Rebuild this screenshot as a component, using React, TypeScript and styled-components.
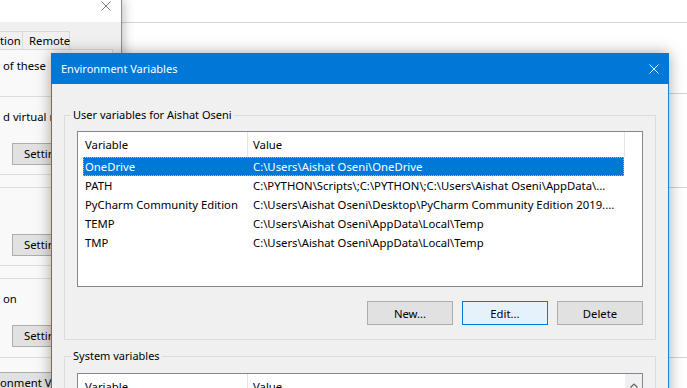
import * as React from 'react'
import styled, { createGlobalStyle } from 'styled-components'

type Variable = {
  name: string
  value: string
}

const userVariables: Variable[] = [
  { name: 'OneDrive', value: 'C:\\Users\\Aishat Oseni\\OneDrive' },
  { name: 'PATH', value: 'C:\\PYTHON\\Scripts\\;C:\\PYTHON\\;C:\\Users\\Aishat Oseni\\AppData\\...' },
  { name: 'PyCharm Community Edition', value: 'C:\\Users\\Aishat Oseni\\Desktop\\PyCharm Community Edition 2019....' },
  { name: 'TEMP', value: 'C:\\Users\\Aishat Oseni\\AppData\\Local\\Temp' },
  { name: 'TMP', value: 'C:\\Users\\Aishat Oseni\\AppData\\Local\\Temp' },
]

const GlobalStyle = createGlobalStyle`
  html, body {
    margin: 0;
    padding: 0;
    background: #ffffff;
  }
  body {
    font-family: "Noto Sans", "Open Sans", sans-serif;
    font-size: 11.3px;
    color: #000;
  }
`

const CloseIcon: React.FC<{ color: string }> = ({ color }) => (
  <svg width="10" height="10" viewBox="0 0 10 10">
    <path d="M0.5 0.5 L9.5 9.5 M9.5 0.5 L0.5 9.5" stroke={color} strokeWidth="1" fill="none" />
  </svg>
)

const ChevronUp = () => (
  <svg width="8" height="5" viewBox="0 0 8 5">
    <path d="M0.5 4.5 L4 1 L7.5 4.5" stroke="#606060" strokeWidth="1.2" fill="none" />
  </svg>
)

const App: React.FC = () => {
  return (
    <Desktop>
      <GlobalStyle />
      <Backdrop>
        <BackdropBand $height={23} />
        <BackdropBand $height={71} />
        <BackdropBand $height={94} />
        <BackdropBand $height={170} />
      </Backdrop>

      <BackWindow>
        <BackTitleBar>
          <CloseIcon color="#7a7a7a" />
        </BackTitleBar>
        <TabStrip>
          <Tab $width={23}>tion</Tab>
          <Tab $width={48} $padLeft={6}>Remote</Tab>
        </TabStrip>
        <TabPanel>
          <PanelText $top={8} $width={48}>of these changes.</PanelText>
          <BackGroup $top={22} $height={79}>
            <PanelText $top={12} $width={54}>d virtual memory</PanelText>
            <BackButton $top={18}>Settings...</BackButton>
          </BackGroup>
          <BackGroup $top={12} $height={79}>
            <BackButton $top={46}>Settings...</BackButton>
          </BackGroup>
          <BackGroup $top={12} $height={80}>
            <PanelText $top={12} $width={54}>on</PanelText>
            <BackButton $top={18}>Settings...</BackButton>
          </BackGroup>
          <EnvButton>onment Variables...</EnvButton>
        </TabPanel>
      </BackWindow>

      <Dialog>
        <TitleBar>
          <TitleText>Environment Variables</TitleText>
          <CloseIcon color="#ffffff" />
        </TitleBar>
        <DialogBody>
          <GroupBox $top={23}>
            <GroupLegend>User variables for Aishat Oseni</GroupLegend>
            <ListBox $height={156}>
              <ListMain>
                <HeaderRow>
                  <HeaderCell $width={170} $padLeft={7}>Variable</HeaderCell>
                  <HeaderCell $width={377} $padLeft={5}>Value</HeaderCell>
                </HeaderRow>
                {userVariables.map((v, i) => (
                  <Row key={v.name} $selected={i === 0}>
                    <Cell $width={164} $padLeft={2}>{v.name}</Cell>
                    <Cell $width={377} $padLeft={6}>{v.value}</Cell>
                  </Row>
                ))}
              </ListMain>
            </ListBox>
            <ButtonRow>
              <Button>New...</Button>
              <Button $focused>Edit...</Button>
              <Button>Delete</Button>
            </ButtonRow>
          </GroupBox>
          <GroupBox $top={8}>
            <GroupLegend>System variables</GroupLegend>
            <ListBox $height={156} $top={9}>
              <ListMain>
                <HeaderRow>
                  <HeaderCell $width={170} $padLeft={7}>Variable</HeaderCell>
                  <HeaderCell $width={376} $padLeft={5} $noDivider>Value</HeaderCell>
                </HeaderRow>
              </ListMain>
              <ScrollBar>
                <ChevronUp />
              </ScrollBar>
            </ListBox>
          </GroupBox>
        </DialogBody>
      </Dialog>
    </Desktop>
  )
}

export default App

const Desktop = styled.div`
  position: relative;
  width: 687px;
  height: 388px;
  overflow: hidden;
  background: #ffffff;
`

const Backdrop = styled.div`
  position: absolute;
  inset: 0;
  display: flex;
  flex-direction: column;
`

const BackdropBand = styled.div<{ $height: number }>`
  box-sizing: border-box;
  height: ${(p) => p.$height}px;
  flex-shrink: 0;
  border-bottom: 1px solid #d4d4d4;
`

const BackWindow = styled.div`
  position: absolute;
  left: 0;
  top: 0;
  width: 122px;
  height: 388px;
  box-sizing: border-box;
  background: #f0f0f0;
  border-right: 1px solid #8e8e8e;
  box-shadow: 2px 0 10px rgba(0, 0, 0, 0.25);
  display: flex;
  flex-direction: column;
  overflow: hidden;
`

const BackTitleBar = styled.div`
  height: 22px;
  flex-shrink: 0;
  background: #ffffff;
  display: flex;
  justify-content: flex-end;
  align-items: flex-start;
  padding: 1px 10px 0 0;
  box-sizing: border-box;
`

const TabStrip = styled.div`
  display: flex;
  margin-top: 9px;
  height: 18px;
`

const Tab = styled.div<{ $width: number; $padLeft?: number }>`
  box-sizing: border-box;
  width: ${(p) => p.$width}px;
  height: 18px;
  padding-left: ${(p) => p.$padLeft ?? 0}px;
  border: 1px solid #d9d9d9;
  border-left: ${(p) => (p.$padLeft ? '1px solid #d9d9d9' : 'none')};
  border-bottom: none;
  margin-left: ${(p) => (p.$padLeft ? '-1px' : '0')};
  line-height: 17px;
  white-space: nowrap;
`

const TabPanel = styled.div`
  box-sizing: border-box;
  width: 113px;
  flex: 1;
  border-top: 1px solid #d9d9d9;
  border-right: 1px solid #d9d9d9;
  background: #f9f9f9;
  display: flex;
  flex-direction: column;
`

const PanelText = styled.div<{ $top: number; $width: number }>`
  box-sizing: border-box;
  margin-top: ${(p) => p.$top}px;
  width: ${(p) => p.$width}px;
  padding-left: 3px;
  line-height: 16px;
  white-space: nowrap;
  overflow: hidden;
`

const BackGroup = styled.div<{ $top: number; $height: number }>`
  box-sizing: border-box;
  margin: ${(p) => p.$top}px 0 0 -4px;
  height: ${(p) => p.$height}px;
  border: 1px solid #dcdcdc;
  flex-shrink: 0;
  display: flex;
  flex-direction: column;
  & > ${PanelText} {
    padding-left: 6px;
  }
`

const BackButton = styled.div<{ $top: number }>`
  box-sizing: border-box;
  margin: ${(p) => p.$top}px 0 0 15px;
  width: 40px;
  height: 22px;
  flex-shrink: 0;
  background: #e1e1e1;
  border: 1px solid #adadad;
  padding-left: 11px;
  line-height: 20px;
  white-space: nowrap;
  overflow: hidden;
`

const EnvButton = styled.div`
  box-sizing: border-box;
  margin: 14px 0 0 -2px;
  width: 54px;
  height: 24px;
  background: #e1e1e1;
  border: 1px solid #adadad;
  padding-left: 1px;
  line-height: 20px;
  white-space: nowrap;
  overflow: hidden;
`

const Dialog = styled.div`
  position: absolute;
  left: 51px;
  top: 53px;
  width: 618px;
  height: 380px;
  box-sizing: border-box;
  background: #f0f0f0;
  border: 1px solid #1a83d4;
  border-top: none;
  box-shadow: 0 0 14px rgba(0, 0, 0, 0.35);
  display: flex;
  flex-direction: column;
`

const TitleBar = styled.div`
  height: 31px;
  flex-shrink: 0;
  background: #0078d7;
  display: flex;
  align-items: center;
  justify-content: space-between;
  padding: 0 10px 0 9px;
  margin: 0 -1px;
  box-sizing: border-box;
`

const TitleText = styled.div`
  color: #ffffff;
  font-size: 11px;
  padding-left: 1px;
`

const DialogBody = styled.div`
  padding: 0 12px;
  display: flex;
  flex-direction: column;
`

const GroupBox = styled.fieldset<{ $top: number }>`
  margin: ${(p) => p.$top}px 0 0 0;
  padding: 0 12px 14px 12px;
  border: 1px solid #dcdcdc;
  min-width: 0;
  display: flex;
  flex-direction: column;
`

const GroupLegend = styled.legend`
  padding: 0 2px;
  margin-left: -6px;
  line-height: 16px;
  font-size: 11px;
`

const ListBox = styled.div<{ $height: number; $top?: number }>`
  box-sizing: border-box;
  margin-top: ${(p) => p.$top ?? 8}px;
  height: ${(p) => p.$height}px;
  background: #ffffff;
  border: 1px solid #828790;
  display: flex;
  overflow: hidden;
`

const ListMain = styled.div`
  flex: 1;
  display: flex;
  flex-direction: column;
  min-width: 0;
`

const HeaderRow = styled.div`
  display: flex;
  height: 25px;
  flex-shrink: 0;
`

const HeaderCell = styled.div<{ $width: number; $padLeft: number; $noDivider?: boolean }>`
  box-sizing: border-box;
  width: ${(p) => p.$width}px;
  padding-left: ${(p) => p.$padLeft}px;
  border-right: ${(p) => (p.$noDivider ? 'none' : '1px solid #e5e5e5')};
  line-height: 25px;
  white-space: nowrap;
`

const Row = styled.div<{ $selected?: boolean }>`
  box-sizing: border-box;
  display: flex;
  height: 19px;
  width: 541px;
  margin-left: 5px;
  background: ${(p) => (p.$selected ? '#0078d7' : 'transparent')};
  color: ${(p) => (p.$selected ? '#ffffff' : '#000000')};
  border: 1px dotted ${(p) => (p.$selected ? '#f0a44a' : 'transparent')};
  line-height: 17px;
`

const Cell = styled.div<{ $width: number; $padLeft: number }>`
  box-sizing: border-box;
  width: ${(p) => p.$width}px;
  padding-left: ${(p) => p.$padLeft}px;
  margin-left: -1px;
  white-space: nowrap;
  overflow: hidden;
  flex-shrink: 0;
  & + & {
    margin-left: 0;
  }
`

const ButtonRow = styled.div`
  display: flex;
  justify-content: flex-end;
  gap: 9px;
  margin-top: 14px;
`

const Button = styled.div<{ $focused?: boolean }>`
  box-sizing: border-box;
  width: 86px;
  height: 24px;
  background: ${(p) => (p.$focused ? '#e5f1fb' : '#e1e1e1')};
  border: 1px solid ${(p) => (p.$focused ? '#0078d7' : '#adadad')};
  display: flex;
  align-items: center;
  justify-content: center;
`

const ScrollBar = styled.div`
  width: 17px;
  flex-shrink: 0;
  background: #f0f0f0;
  display: flex;
  justify-content: center;
  padding-top: 9px;
  box-sizing: border-box;
`
